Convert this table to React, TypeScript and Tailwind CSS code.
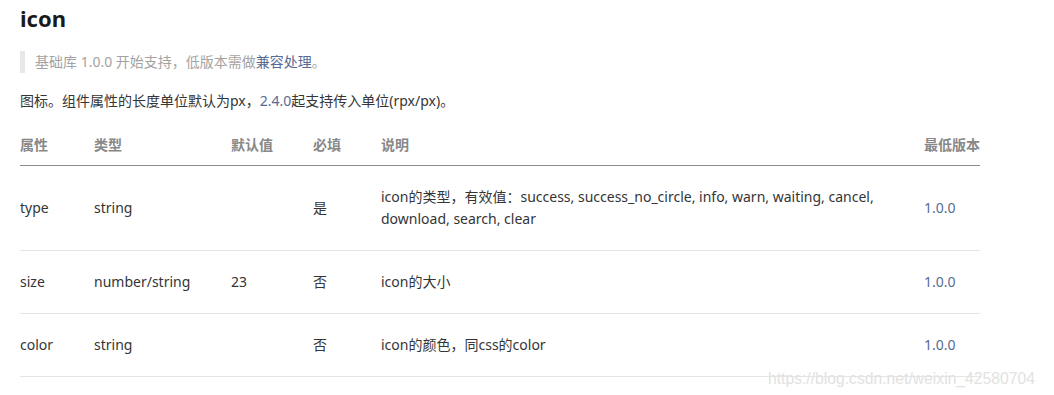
import React from "react";

type Row = {
  name: string;
  type: string;
  def: string;
  required: string;
  desc: React.ReactNode;
  version: string;
};

const rows: Row[] = [
  {
    name: "type",
    type: "string",
    def: "",
    required: "是",
    desc: "icon的类型，有效值：success, success_no_circle, info, warn, waiting, cancel, download, search, clear",
    version: "1.0.0",
  },
  {
    name: "size",
    type: "number/string",
    def: "23",
    required: "否",
    desc: "icon的大小",
    version: "1.0.0",
  },
  {
    name: "color",
    type: "string",
    def: "",
    required: "否",
    desc: "icon的颜色，同css的color",
    version: "1.0.0",
  },
];

const font = {
  fontFamily: '"Noto Sans", "Noto Sans CJK SC", sans-serif',
};

const App = () => {
  return (
    <section
      className="relative w-[1054px] h-[395px] bg-white text-[#353535] overflow-hidden"
      style={font}
    >
      <div className="pl-5 w-[980px]">
        <h1 className="text-[22px] leading-[36px] font-bold text-[#1a1a1a]">icon</h1>

        <div className="mt-[15px] border-l-[5px] border-[#e8e8e8] pl-[10px] text-[14px] leading-[22px] text-[#a3a3a3]">
          基础库 1.0.0 开始支持，低版本需做<span className="text-[#576b95]">兼容处理</span>。
        </div>

        <p className="mt-[17px] text-[14px] leading-[22px]">
          图标。组件属性的长度单位默认为px，<span className="text-[#576b95]">2.4.0</span>
          起支持传入单位(rpx/px)。
        </p>

        <table className="mt-[13px] w-[960px] table-fixed text-[14px] leading-[22px] text-left">
          <colgroup>
            <col className="w-[74px]" />
            <col className="w-[137px]" />
            <col className="w-[82px]" />
            <col className="w-[68px]" />
            <col className="w-[543px]" />
            <col className="w-[56px]" />
          </colgroup>
          <thead>
            <tr className="border-b border-[#8c8c8c] text-[#888888]">
              <th className="py-[9px] font-bold">属性</th>
              <th className="py-[9px] font-bold">类型</th>
              <th className="py-[9px] font-bold">默认值</th>
              <th className="py-[9px] font-bold">必填</th>
              <th className="py-[9px] font-bold">说明</th>
              <th className="py-[9px] font-bold whitespace-nowrap">最低版本</th>
            </tr>
          </thead>
          <tbody>
            {rows.map((row) => (
              <tr key={row.name} className="border-b border-[#e5e5e5]">
                <td className="py-5">{row.name}</td>
                <td className="py-5">{row.type}</td>
                <td className="py-5">{row.def}</td>
                <td className="py-5">{row.required}</td>
                <td className="py-5 pr-[40px]">{row.desc}</td>
                <td className="py-5 text-[#576b95]">{row.version}</td>
              </tr>
            ))}
          </tbody>
        </table>
      </div>

      <div
        className="absolute left-[768px] top-[369px] text-[15.7px] leading-[20px] text-[#e2e2e2] whitespace-nowrap"
        style={{ fontFamily: '"Liberation Sans", Arial, sans-serif' }}
      >
        https://blog.csdn.net/weixin_42580704
      </div>
    </section>
  );
};

export default App;
